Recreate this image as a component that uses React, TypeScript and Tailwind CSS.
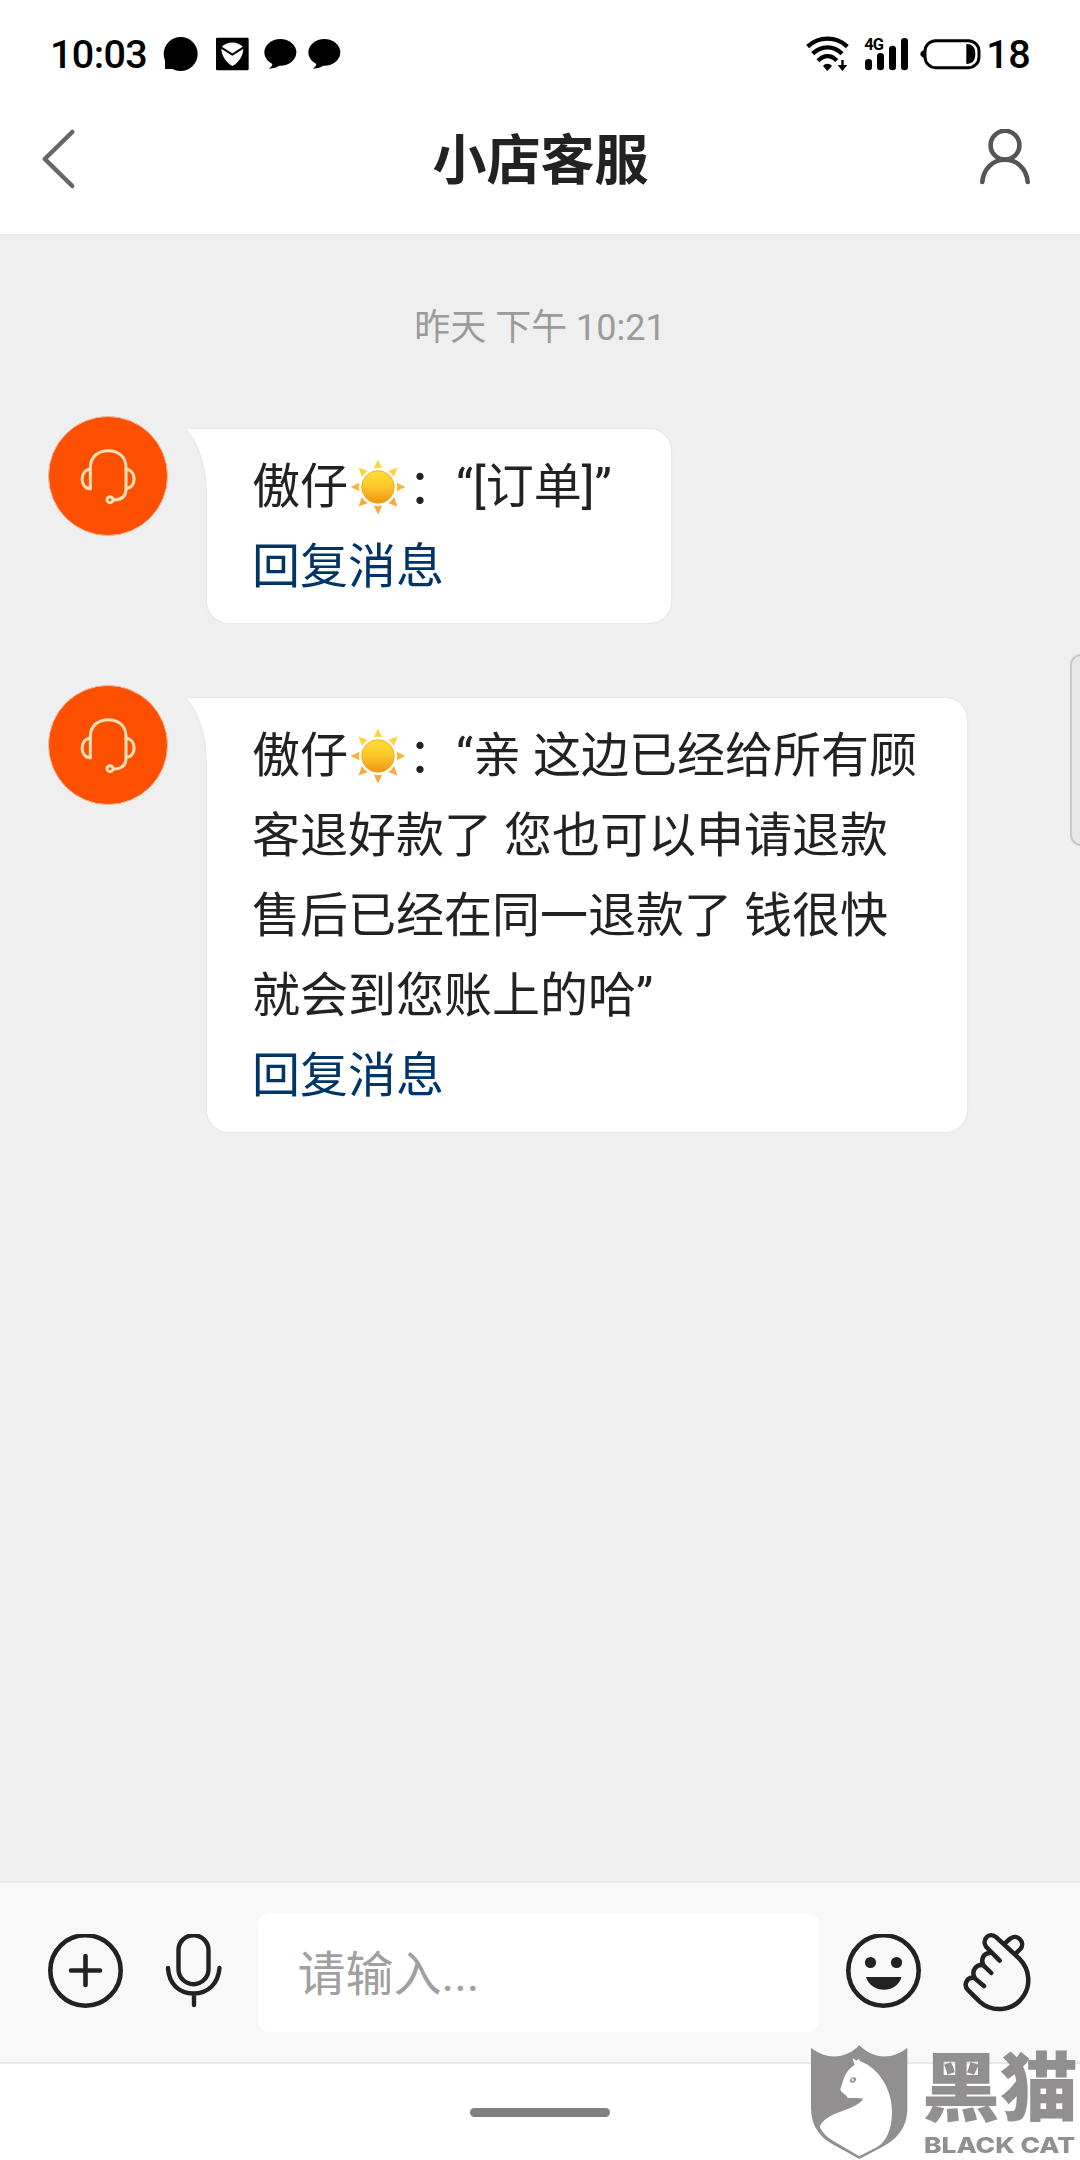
import type { ReactNode } from "react";

const RAYS = [0, 45, 90, 135, 180, 225, 270, 315];

function StatusBar() {
  return (
    <div className="flex h-[108px] items-center pl-[50px] font-['Roboto',sans-serif] text-[39.5px] font-medium text-black">
      <span className="w-[113px] pt-[1px] leading-none tracking-[-0.6px]">10:03</span>
      <svg className="h-9 w-[35px]" viewBox="399 48 105 108">
        <circle cx="452" cy="102" r="51" />
        <path d="M405 147V115l35 32z" />
      </svg>
      <svg className="ml-[18px] h-9 w-[33px]" viewBox="558 48 99 108">
        <rect x="558" y="53" width="98" height="98" rx="4" />
        <path
          d="M574 82C590 63 623 63 640 82C641 108 625 130 607 138C590 130 573 108 574 82Z"
          fill="#fff"
        />
        <path d="M573 82L607 104L641 82" fill="none" stroke="#000" strokeWidth="6" />
      </svg>
      <div className="ml-[15px] flex gap-[11px]">
        <ChatBubbleIcon />
        <ChatBubbleIcon />
      </div>
      <div className="flex-1" />
      <svg className="h-9 w-[43px]" viewBox="47 48 129 108">
        <g fill="none" stroke="#000" strokeWidth="13">
          <path d="M52 80C85 48 138 48 171 80" />
          <path d="M67 101C93 76 130 76 155 101" />
          <path d="M83 122C101 104 123 104 139 122" />
        </g>
        <path d="M98 138C106 129 117 129 125 138L111 153Z" />
        <path d="M153 120h7v15h11L156 153L142 135h11z" />
      </svg>
      <div className="relative ml-[16px] h-9 w-[44px]">
        <span className="absolute top-[1px] left-[-1px] text-[16.5px] leading-none font-bold tracking-[-1px]">
          4G
        </span>
        <svg className="h-9 w-[44px]" viewBox="225 48 132 108">
          <rect x="225" y="117" width="21" height="34" rx="10" />
          <rect x="261" y="99" width="21" height="52" rx="10" />
          <rect x="297" y="77" width="21" height="74" rx="10" />
          <rect x="333" y="54" width="21" height="97" rx="10" />
        </svg>
      </div>
      <svg className="ml-[11px] h-9 w-[62px]" viewBox="389 48 186 108">
        <rect x="404" y="62" width="162" height="81" rx="32" fill="none" stroke="#000" strokeWidth="9" />
        <path d="M402 90C386 94 386 110 402 114Z" />
        <path d="M528 72C546 72 555 82 555 102S546 132 528 132Z" />
      </svg>
      <span className="mr-[50px] ml-[4px] pt-[1px] leading-none tracking-[-0.6px]">18</span>
    </div>
  );
}

function ChatBubbleIcon() {
  return (
    <svg className="h-9 w-[33px]" viewBox="701 48 99 108">
      <ellipse cx="750" cy="97" rx="48" ry="40" />
      <path d="M726 125C728 135 722 141 716 146C732 146 744 141 752 132Z" />
    </svg>
  );
}

function Header() {
  return (
    <header className="flex h-[128px] items-center justify-between border-b-2 border-[#e8e8e8] pr-[48px] pb-[24px] pl-[40px]">
      <svg
        className="h-[62px] w-[62px]"
        viewBox="0 0 62 62"
        fill="none"
        stroke="#666"
        strokeWidth="4.500"
        strokeLinecap="round"
        strokeLinejoin="round"
      >
        <path d="M32.300 4L4.800 31L32.300 58" />
      </svg>
      <h1 className="pt-[5px] text-[54px] leading-none font-bold">小店客服</h1>
      <svg
        className="h-[60px] w-[53px]"
        viewBox="979 129 53 60"
        fill="none"
        stroke="#555"
        strokeWidth="4.600"
        strokeLinecap="round"
      >
        <circle cx="1005" cy="145.200" r="14.400" />
        <path d="M982.300 182C983.500 168.500 993 159.800 1005 159.800S1026.500 168.500 1027.700 182" />
      </svg>
    </header>
  );
}

function Avatar() {
  return (
    <div className="h-[120px] w-[120px] shrink-0 rounded-full border border-[#f0b59c] bg-[#fc5000]">
      <svg
        className="h-[118px] w-[118px]"
        viewBox="57 81 354 354"
        fill="none"
        stroke="#ffdfb5"
        strokeWidth="9"
        strokeLinecap="round"
      >
        <path d="M181 296V232C181 200 205 182 235 182S288 200 288 232V298C288 320 275 330 250 330" />
        <path d="M181 238C148 240 148 296 181 296" />
        <path d="M288 238C320 240 320 292 290 295" />
        <circle cx="240" cy="329" r="9" />
      </svg>
    </div>
  );
}

function Sun() {
  return (
    <svg className="inline-block h-[60px] w-[60px] align-[-14px]" viewBox="-30 -30 60 60">
      <defs>
        <linearGradient id="disc" x1="0" y1="0" x2="0" y2="1">
          <stop offset="0" stopColor="#ffe032" />
          <stop offset="0.5" stopColor="#fcc62a" />
          <stop offset="1" stopColor="#f09410" />
        </linearGradient>
      </defs>
      {RAYS.map((angle) => (
        <path
          key={angle}
          d="M0 -27.500L4.200 -18.500Q0 -20 -4.200 -18.500Z"
          fill={angle > 90 && angle < 270 ? "#f9a93a" : angle % 180 === 90 ? "#fcb32e" : "#fdd43c"}
          transform={`rotate(${angle})`}
        />
      ))}
      <circle r="16.300" fill="url(#disc)" stroke="#e9a21c" strokeWidth="0.800" />
    </svg>
  );
}

function Message({ className, children }: { className: string; children: ReactNode }) {
  return (
    <div className="flex pl-[48px]">
      <Avatar />
      <div className="mt-[13px] ml-[18px] flex drop-shadow-[0_0_1px_#dcdcdc]">
        {/* curved tail joining the bubble's square corner */}
        <svg className="h-[60px] w-[21px] shrink-0" viewBox="0 0 21 60">
          <path d="M1 0H21V60H20.500C20.500 35 13 16 1 0Z" fill="#fff" />
        </svg>
        <div
          className={`rounded-[22px] rounded-tl-none bg-white pt-[18px] pb-[16px] pl-[45px] text-[48px] leading-[80px] whitespace-nowrap ${className}`}
        >
          {children}
          <div className="text-[#003569]">回复消息</div>
        </div>
      </div>
    </div>
  );
}

function InputBar() {
  return (
    <div className="flex h-[183px] items-center border-y-2 border-[#e8e8e8] bg-[#f8f8f8] pl-[47px]">
      <svg
        className="h-[78px] w-[78px]"
        viewBox="-39 -37.500 78 78"
        fill="none"
        stroke="#222"
        strokeWidth="4.6"
        strokeLinecap="round"
      >
        <circle cx="-0.500" cy="-1" r="35.200" />
        <path d="M-15 -1H14M-0.500 -15.500V13.500" />
      </svg>
      <svg
        className="ml-[39px] h-[78px] w-[60px]"
        viewBox="164 1933 60 78"
        fill="none"
        stroke="#222"
        strokeWidth="4.4"
        strokeLinecap="round"
      >
        <rect x="178.500" y="1934.200" width="30" height="49" rx="15" />
        <path d="M168 1967C169 1983 179 1992.500 193.500 1992.500S218 1983 219.500 1967M194 1993V2004" />
      </svg>
      <div className="ml-[34px] flex h-[119px] w-[561px] items-center rounded-[12px] bg-white pt-[4px] pl-[39.5px] text-[48px] text-[#a0a0a0]">
        请输入...
      </div>
      <svg className="ml-[26px] h-[78px] w-[78px]" viewBox="-39 -37.500 78 78">
        <circle cx="-0.500" cy="-1" r="35.200" fill="none" stroke="#222" strokeWidth="4.600" />
        <circle cx="-13.500" cy="-9" r="5.600" fill="#222" />
        <circle cx="12.500" cy="-9" r="5.600" fill="#222" />
        <path d="M-18 5.500H17.500C13 22.500 -13 22.500 -18 5.500Z" fill="#222" />
      </svg>
      <svg
        className="ml-[39px] h-[83px] w-[71px]"
        viewBox="427 184 213 249"
        fill="none"
        stroke="#222"
        strokeWidth="13.5"
        strokeLinecap="round"
        strokeLinejoin="round"
      >
        <path d="M540 273L500 232C484 212 508 184 530 203L599 267C634 303 631 350 612 378C580 428 515 428 480 396L446 362C430 347 440 321 464 325L493 349" />
        <path d="M515 310L489 285C469 284 454 303 465 325" />
        <path d="M509 250C492 251 482 268 491 287" />
        <path d="M558 219L570 208C592 189 619 219 602 238L588 252" />
      </svg>
    </div>
  );
}

function Watermark() {
  return (
    <div className="absolute right-0 bottom-0 flex h-[116px] w-[270px] text-[#918f90]">
      <svg className="h-[116px] w-[100px] shrink-0" viewBox="62 42 300 348">
        <path
          d="M65 53C110 90 170 88 210 46C250 88 310 90 354 53V235C354 290 325 328 280 350L210 387L130 343C85 318 65 280 65 235Z"
          fill="currentColor"
        />
        <path
          d="M196 104L189 84L202 92L208 86L213 94C270 115 308 180 308 245C308 300 290 335 262 352L210 379L136 335C113 322 100 308 91 290C115 240 195 245 222 206C205 202 190 205 175 204C172 192 153 189 153 176C163 158 160 128 196 104Z"
          fill="#fff"
        />
        <path d="M182 151C184 141 195 138 201 147C198 158 190 160 182 156Z" fill="currentColor" />
        <path d="M188 143L195 151L187 154Z" fill="#fff" />
      </svg>
      <div className="ml-[12px] flex flex-col">
        <div className="mt-[7px] h-[76px] origin-left scale-x-[1.04] text-[75px] leading-[76px] font-black whitespace-nowrap">
          黑猫
        </div>
        <div className="mt-[7px] ml-[2px] origin-left scale-x-[1.2] font-['Inter',sans-serif] text-[22px] leading-[22px] font-extrabold whitespace-nowrap">
          BLACK CAT
        </div>
      </div>
    </div>
  );
}

export default function App() {
  return (
    <div className="relative flex h-[2160px] w-[1080px] flex-col overflow-hidden bg-white font-['Roboto','Noto_Sans_CJK_SC',sans-serif] text-[#222]">
      <StatusBar />
      <Header />
      <main className="relative flex-1 bg-[#efefef]">
        <div className="pt-[65px] text-center text-[36px] leading-[54px] text-[#9b9b9b]">
          昨天 下午 10:21
        </div>
        <div className="mt-[61px] flex flex-col gap-[62px]">
          <Message className="w-[464px]">
            <div>
              傲仔
              <Sun />
              ：“[订单]”
            </div>
          </Message>
          <Message className="w-[760px]">
            <div>
              傲仔
              <Sun />
              ：“亲 这边已经给所有顾
              <br />
              客退好款了 您也可以申请退款
              <br />
              售后已经在同一退款了 钱很快
              <br />
              就会到您账上的哈”
            </div>
          </Message>
        </div>
        {/* edge panel handle */}
        <div className="absolute top-[418px] -right-[12px] h-[192px] w-[22px] rounded-[12px] border-2 border-[#c8c8c8] bg-[#e8e8e8]" />
      </main>
      <InputBar />
      <div className="flex h-[96px] justify-center pt-[44px]">
        <div className="h-[9px] w-[140px] rounded-full bg-[#808080]" />
      </div>
      <Watermark />
    </div>
  );
}
